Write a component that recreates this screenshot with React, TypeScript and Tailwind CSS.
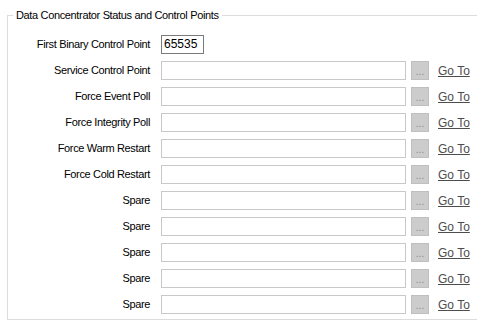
const rows = [
  "Service Control Point",
  "Force Event Poll",
  "Force Integrity Poll",
  "Force Warm Restart",
  "Force Cold Restart",
  "Spare",
  "Spare",
  "Spare",
  "Spare",
  "Spare",
];

export default function App() {
  return (
    <div
      className="w-[477px] h-[329px] bg-white overflow-hidden text-[11px] tracking-[-0.35px] text-black"
      style={{ fontFamily: '"Liberation Sans", Arial, sans-serif' }}
    >
      <fieldset className="ml-[7px] mt-[7px] w-[480px] h-[313px] border border-[#dcdcdc] pl-0 pr-0">
        <legend className="ml-[5px] px-[3px] leading-[16px] text-[#000000]">
          Data Concentrator Status and Control Points
        </legend>
        <div className="flex flex-col pt-[12px]">
          <div className="flex items-center h-[19px]">
            <div className="w-[142px] text-right">First Binary Control Point</div>
            <div className="ml-[11px] w-[43px] h-[19px] border border-[#7a7a7a] px-[2px] text-[12px] tracking-normal leading-[16px]">
              65535
            </div>
          </div>
          {rows.map((label, i) => (
            <div key={i} className="flex items-center h-[19px] mt-[7px]">
              <div className="w-[142px] text-right">{label}</div>
              <div className="ml-[11px] w-[245px] h-[19px] border border-[#c8c8c8] bg-white" />
              <div className="ml-[5px] w-[18px] h-[19px] border border-[#bfbfbf] bg-[#cccccc] text-[#8a8a8a] text-[10px] tracking-normal leading-[20px] text-center">
                ...
              </div>
              <a className="ml-[9px] text-[12px] tracking-normal underline text-[#4d4d4d] cursor-pointer">Go To</a>
            </div>
          ))}
        </div>
      </fieldset>
    </div>
  );
}
